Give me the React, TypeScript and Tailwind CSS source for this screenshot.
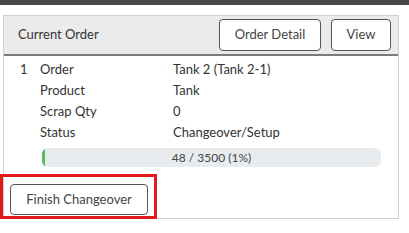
import React from 'react';

const rows = [
  { n: '1', label: 'Order', value: 'Tank 2 (Tank 2-1)' },
  { n: '', label: 'Product', value: 'Tank' },
  { n: '', label: 'Scrap Qty', value: '0' },
  { n: '', label: 'Status', value: 'Changeover/Setup' },
];

export default function App() {
  const done = 48;
  const total = 3500;
  const pct = Math.round((done / total) * 100);

  return (
    <div
      className="relative w-[409px] h-[233px] overflow-hidden bg-white text-[#333]"
      style={{ fontFamily: 'Lato, "Open Sans", sans-serif' }}
    >
      <div className="h-[5px] bg-[#474747]" />

      <div className="mt-[10px] ml-[3px] w-[396px] h-[204px] border border-[#cfcfcf] flex flex-col">
        <div className="h-[40px] bg-[#ebebeb] border-b-2 border-[#7a7a7a] flex items-center justify-between pl-[14px] pr-[7px]">
          <span className="text-[13px]">Current Order</span>
          <div className="flex gap-[10px]">
            <button className="w-[102px] h-[32px] bg-white border border-[#555] rounded-[4px] text-[13px] text-[#444]">
              Order Detail
            </button>
            <button className="w-[60px] h-[32px] bg-white border border-[#555] rounded-[4px] text-[13px] text-[#444]">
              View
            </button>
          </div>
        </div>

        <div className="pt-[3px] pl-[16px] pr-[17px]">
          {rows.map((r) => (
            <div key={r.label} className="grid grid-cols-[20px_133px_1fr] h-[21px] items-center text-[13px]">
              <span>{r.n}</span>
              <span>{r.label}</span>
              <span>{r.value}</span>
            </div>
          ))}
          <div className="relative ml-[22px] mt-[5px] h-[19px] rounded-[6px] bg-[#e9ecef] overflow-hidden flex items-center justify-center">
            <div className="absolute left-0 top-0 h-full bg-[#5cb85c]" style={{ width: `${Math.max(pct, 1)}%` }} />
            <span className="relative text-[12px] text-[#444]">
              {done} / {total} ({pct}%)
            </span>
          </div>
        </div>

        <div className="pt-[17px] pl-[6px]">
          <button className="w-[138px] h-[31px] bg-white border border-[#555] rounded-[4px] text-[13px] text-[#444]">
            Finish Changeover
          </button>
        </div>
      </div>

      <div className="absolute left-0 top-[174px] w-[157px] h-[45px] border-[3px] border-[#e3191c]" />
    </div>
  );
}
